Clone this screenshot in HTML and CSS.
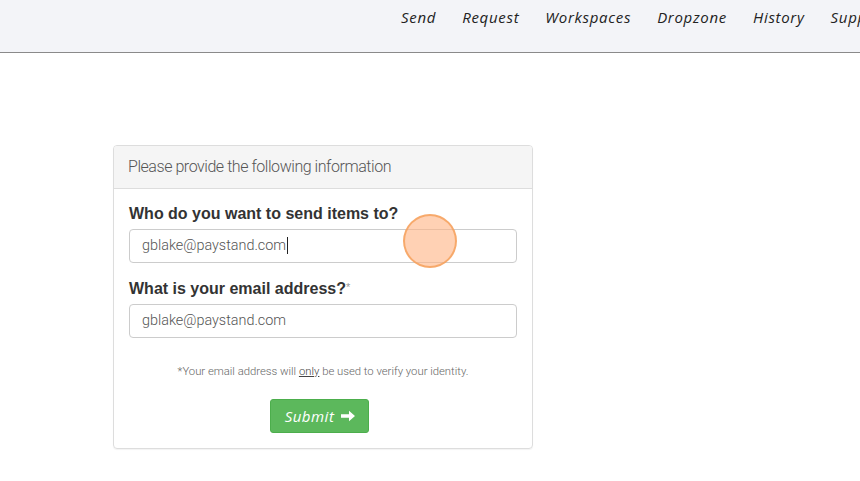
FILE: index.html
```html
<!DOCTYPE html>
<html>
<head>
<meta charset="utf-8">
<link rel="stylesheet" href="styles.css">
</head>
<body>
<header class="topbar">
  <nav class="nav">
    <a class="nav-link">Send</a>
    <a class="nav-link">Request</a>
    <a class="nav-link">Workspaces</a>
    <a class="nav-link">Dropzone</a>
    <a class="nav-link">History</a>
    <a class="nav-link">Support</a>
  </nav>
</header>
<main class="main">
  <section class="panel">
    <div class="panel-heading">Please provide the following information</div>
    <div class="panel-body">
      <div class="form-group">
        <label class="label">Who do you want to send items to?</label>
        <div class="form-control">gblake@paystand.com<span class="caret"></span></div>
      </div>
      <div class="form-group">
        <label class="label">What is your email address?<span class="req">*</span></label>
        <div class="form-control">gblake@paystand.com</div>
      </div>
      <p class="note">*Your email address will <u>only</u> be used to verify your identity.</p>
      <div class="actions">
        <button class="btn">Submit
          <svg class="arrow" width="14" height="12" viewBox="0 0 14 12"><path d="M0 4.3h8V0.8l6 5.2-6 5.2V7.7H0z" fill="#fff"/></svg>
        </button>
      </div>
    </div>
  </section>
  <div class="click-dot"></div>
</main>
</body>
</html>
```
FILE: styles.css
```css
html, body { margin: 0; padding: 0; background: #fff; }
body { font-family: "Liberation Sans", Arial, sans-serif; color: #333; width: 860px; height: 481px; overflow: hidden; }
.topbar { height: 52px; background: #f3f4f8; border-bottom: 1px solid #8a8a8a; overflow: hidden; }
.nav { display: flex; gap: 26px; padding-left: 401px; padding-top: 7px; white-space: nowrap; }
.nav-link { font-family: "Open Sans", sans-serif; font-style: italic; font-size: 15px; letter-spacing: 0.7px; line-height: 20px; color: #222; }
.main { position: relative; padding-top: 92px; padding-left: 113px; }
.panel { width: 418px; border: 1px solid #ddd; border-radius: 4px; box-shadow: 0 1px 1px rgba(0,0,0,0.05); }
.panel-heading { height: 43px; box-sizing: border-box; padding: 11px 14px; background: #f5f5f5; border-bottom: 1px solid #ddd; border-radius: 3px 3px 0 0; font-family: Roboto, sans-serif; font-weight: 300; font-size: 16px; letter-spacing: -0.45px; line-height: 20px; color: #555; }
.panel-body { padding: 15px; }
.form-group { margin-bottom: 16px; }
.label { display: block; font-weight: bold; font-size: 16px; line-height: 20px; margin-bottom: 5px; color: #333; }
.req { font-size: 11px; color: #999; font-weight: normal; vertical-align: top; position: relative; top: -2px; }
.form-control { height: 34px; box-sizing: border-box; border: 1px solid #ccc; border-radius: 4px; padding: 7px 12px; font-family: Roboto, sans-serif; font-weight: 300; font-size: 14.4px; line-height: 18px; color: #555; }
.caret { display: inline-block; width: 1px; height: 17px; background: #222; vertical-align: -4px; margin-left: 1px; }
.note { margin: 26px 0 19px; text-align: center; font-family: Roboto, sans-serif; font-weight: 300; font-size: 11.3px; line-height: 16px; color: #666; }
.note u { color: #444; }
.actions { display: flex; justify-content: center; }
.btn { display: flex; align-items: center; gap: 7px; height: 34px; padding: 0 13px 0 14px; margin-right: 7px; background: #5cb85c; border: 1px solid #4cae4c; border-radius: 3px; color: #fff; font-family: "Open Sans", sans-serif; font-style: italic; font-size: 15px; letter-spacing: 0.5px; }
.click-dot { position: absolute; left: 403px; top: 161px; width: 50px; height: 50px; border-radius: 50%; background: rgba(255, 178, 130, 0.6); border: 2px solid rgba(245, 160, 90, 0.8); }
```
